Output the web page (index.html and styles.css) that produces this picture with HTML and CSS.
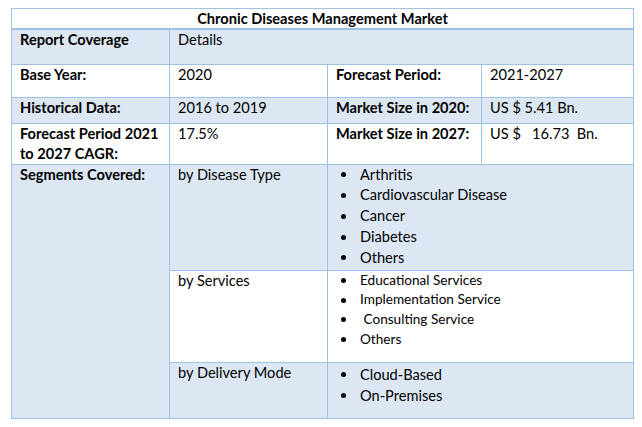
FILE: index.html
```html
<!DOCTYPE html>
<html lang="en">
<head>
<meta charset="utf-8">
<title>Chronic Diseases Management Market</title>
<link rel="stylesheet" href="styles.css">
</head>
<body>
<table class="report">
  <colgroup>
    <col class="c1"><col class="c2"><col class="c3"><col class="c4">
  </colgroup>
  <tr class="r-title">
    <th colspan="4" class="title">Chronic Diseases Management Market</th>
  </tr>
  <tr class="r-cover blue">
    <td class="label">Report Coverage</td>
    <td colspan="3">Details</td>
  </tr>
  <tr class="r-base">
    <td class="label">Base Year:</td>
    <td>2020</td>
    <td class="label">Forecast Period:</td>
    <td>2021-2027</td>
  </tr>
  <tr class="r-hist blue">
    <td class="label">Historical Data:</td>
    <td>2016 to 2019</td>
    <td class="label">Market Size in 2020:</td>
    <td>US $ 5.41 Bn.</td>
  </tr>
  <tr class="r-fore">
    <td class="label">Forecast Period 2021 to 2027 CAGR:</td>
    <td>17.5%</td>
    <td class="label">Market Size in 2027:</td>
    <td class="pre">US $   16.73  Bn.</td>
  </tr>
  <tr class="r-disease blue">
    <td class="label seg" rowspan="3">Segments Covered:</td>
    <td>by Disease Type</td>
    <td colspan="2" class="listcell">
      <ul class="list disease">
        <li>Arthritis</li>
        <li>Cardiovascular Disease</li>
        <li>Cancer</li>
        <li>Diabetes</li>
        <li>Others</li>
      </ul>
    </td>
  </tr>
  <tr class="r-services">
    <td>by Services</td>
    <td colspan="2" class="listcell">
      <ul class="list services">
        <li>Educational Services</li>
        <li>Implementation Service</li>
        <li>&nbsp;Consulting Service</li>
        <li>Others</li>
      </ul>
    </td>
  </tr>
  <tr class="r-delivery blue">
    <td>by Delivery Mode</td>
    <td colspan="2" class="listcell">
      <ul class="list delivery">
        <li>Cloud-Based</li>
        <li>On-Premises</li>
      </ul>
    </td>
  </tr>
</table>
</body>
</html>
```
FILE: styles.css
```css
html, body {
  margin: 0;
  padding: 0;
  background: #ffffff;
}

body {
  font-family: Lato, "Liberation Sans", sans-serif;
  font-size: 14.6px;
  color: #000000;
}

.report {
  margin: 8px 0 0 11px;
  border-collapse: collapse;
  table-layout: fixed;
  width: 622px;
}

.c1 { width: 158px; }
.c2 { width: 158px; }
.c3 { width: 154px; }
.c4 { width: 152px; }

.report th,
.report td {
  border: 1px solid #9cc2e5;
  padding: 0 8px;
  vertical-align: top;
  text-align: left;
  line-height: 20px;
  font-weight: normal;
}

.report .title {
  text-align: center;
  font-weight: bold;
  padding: 0;
  line-height: 19px;
  border-bottom: 2px solid #9cc2e5;
}

.report .label {
  font-weight: bold;
}

.blue td {
  background: #dce7f3;
}

.r-title { height: 20px; }
.r-cover { height: 35px; }
.r-base { height: 33px; }
.r-hist { height: 26px; }
.r-fore { height: 40px; }
.r-disease { height: 106px; }
.r-services { height: 92px; }
.r-delivery { height: 56px; }

.pre {
  white-space: pre;
}

.report .listcell {
  padding: 0 8px 0 13px;
}

.list {
  list-style: none;
  margin: 0;
  padding: 0;
}

.list li {
  display: flex;
  align-items: center;
  gap: 14px;
}

.list li::before {
  content: "";
  flex: none;
  width: 5px;
  height: 5px;
  border-radius: 50%;
  background: #000000;
}

.disease {
  line-height: 20.75px;
}

.services {
  padding-top: 0;
  font-size: 13.6px;
  line-height: 19.7px;
}

.delivery {
  padding-top: 1px;
  line-height: 21px;
}
```
